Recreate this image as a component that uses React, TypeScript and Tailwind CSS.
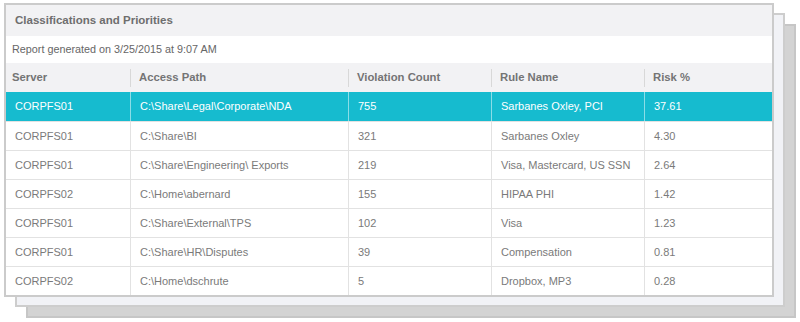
import React from 'react';

const rows = [
  { server: 'CORPFS01', path: 'C:\\Share\\Legal\\Corporate\\NDA', count: '755', rule: 'Sarbanes Oxley, PCI', risk: '37.61' },
  { server: 'CORPFS01', path: 'C:\\Share\\BI', count: '321', rule: 'Sarbanes Oxley', risk: '4.30' },
  { server: 'CORPFS01', path: 'C:\\Share\\Engineering\\ Exports', count: '219', rule: 'Visa, Mastercard, US SSN', risk: '2.64' },
  { server: 'CORPFS02', path: 'C:\\Home\\abernard', count: '155', rule: 'HIPAA PHI', risk: '1.42' },
  { server: 'CORPFS01', path: 'C:\\Share\\External\\TPS', count: '102', rule: 'Visa', risk: '1.23' },
  { server: 'CORPFS01', path: 'C:\\Share\\HR\\Disputes', count: '39', rule: 'Compensation', risk: '0.81' },
  { server: 'CORPFS02', path: 'C:\\Home\\dschrute', count: '5', rule: 'Dropbox, MP3', risk: '0.28' },
];

const cols = 'grid grid-cols-[124px_218px_143px_153px_1fr]';
const headers = ['Server', 'Access Path', 'Violation Count', 'Rule Name', 'Risk %'];

export default function App() {
  return (
    <div className="w-[800px] h-[322px] bg-white pl-[4px] pt-[3px] font-['Liberation_Sans',Arial,sans-serif]">
      {/* stacked card look behind the report */}
      <div className="w-[770px] h-[294px] border-2 border-[#cbcbcb] bg-white flex flex-col shadow-[11px_10px_0_-2px_#f1f2f6,11px_10px_0_0_#cdcdcd,22px_21px_0_-2px_#d3d3d3,22px_21px_0_0_#c6c6c6]">
        <div className="h-[31px] bg-[#f2f2f4] flex items-center pl-[9px] pt-px text-[11.5px] font-bold text-[#6e6e6e]">
          Classifications and Priorities
        </div>
        <div className="h-[27px] flex items-center pl-[6px] text-[10.8px] text-[#666]">
          Report generated on 3/25/2015 at 9:07 AM
        </div>
        <div className={`${cols} h-[29px] bg-[#f2f2f4] text-[11.3px] font-bold text-[#747474]`}>
          {headers.map((h, i) => (
            <div key={h} className="flex items-center">
              {i > 0 && <span className="h-[18px] w-px bg-[#d8d8d8] mr-[8px]" />}
              <span className={i === 0 ? 'pl-[6px]' : ''}>{h}</span>
            </div>
          ))}
        </div>
        {rows.map((r, ri) => {
          const hi = ri === 0;
          const cells = [r.server, r.path, r.count, r.rule, r.risk];
          return (
            <div
              key={ri}
              className={`${cols} h-[29px] text-[11px] ${
                hi ? 'bg-[#16bbcf] text-white' : 'bg-white text-[#7a7a7a] border-t border-[#e2e2e2]'
              }`}
            >
              {cells.map((c, i) => (
                <div
                  key={i}
                  className={`flex items-center ${i === 0 ? 'pl-[9px]' : 'pl-[9px] border-l'} ${
                    hi ? 'border-white/50' : 'border-[#e2e2e2]'
                  }`}
                >
                  {c}
                </div>
              ))}
            </div>
          );
        })}
      </div>
    </div>
  );
}
